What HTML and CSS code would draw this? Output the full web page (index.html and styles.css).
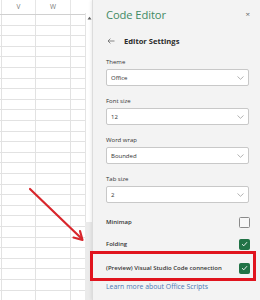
FILE: index.html
```html
<!DOCTYPE html>
<html lang="en">
<head>
<meta charset="utf-8">
<title>Code Editor settings</title>
<link rel="stylesheet" href="styles.css">
</head>
<body>
<div class="app">
  <div class="sheet">
    <div class="sheet-head">
      <span class="col col-edge"></span>
      <span class="col col-v">V</span>
      <span class="col col-w">W</span>
      <span class="col col-rest"></span>
    </div>
    <div class="sheet-body"></div>
  </div>
  <div class="vscroll">
    <div class="vscroll-head"></div>
    <div class="vscroll-track">
      <svg class="vscroll-up" width="5" height="4" viewBox="0 0 5 4"><path d="M0.5 3.5 L2.5 0.8 L4.5 3.5 Z" fill="#606060"/></svg>
    </div>
    <div class="vscroll-rest"></div>
  </div>
  <aside class="panel">
    <header class="panel-head">
      <h1 class="panel-title">Code Editor</h1>
      <span class="panel-close">×</span>
    </header>
    <div class="subhead">
      <svg class="back" width="8" height="6" viewBox="0 0 8 6"><path d="M7.5 3 H1 M3.4 0.6 L1 3 L3.4 5.4" fill="none" stroke="#6b6b6b" stroke-width="0.8"/></svg>
      <h2 class="subhead-title">Editor Settings</h2>
    </div>
    <div class="field">
      <div class="field-label">Theme</div>
      <div class="select"><span>Office</span><svg class="chev" width="7" height="4" viewBox="0 0 7 4"><path d="M0.5 0.5 L3.5 3.3 L6.5 0.5" fill="none" stroke="#a0a0a0" stroke-width="0.8"/></svg></div>
    </div>
    <div class="field">
      <div class="field-label">Font size</div>
      <div class="select"><span>12</span><svg class="chev" width="7" height="4" viewBox="0 0 7 4"><path d="M0.5 0.5 L3.5 3.3 L6.5 0.5" fill="none" stroke="#a0a0a0" stroke-width="0.8"/></svg></div>
    </div>
    <div class="field">
      <div class="field-label">Word wrap</div>
      <div class="select"><span>Bounded</span><svg class="chev" width="7" height="4" viewBox="0 0 7 4"><path d="M0.5 0.5 L3.5 3.3 L6.5 0.5" fill="none" stroke="#a0a0a0" stroke-width="0.8"/></svg></div>
    </div>
    <div class="field">
      <div class="field-label">Tab size</div>
      <div class="select"><span>2</span><svg class="chev" width="7" height="4" viewBox="0 0 7 4"><path d="M0.5 0.5 L3.5 3.3 L6.5 0.5" fill="none" stroke="#a0a0a0" stroke-width="0.8"/></svg></div>
    </div>
    <div class="toggle first">
      <span class="toggle-label">Minimap</span>
      <span class="cb"></span>
    </div>
    <div class="toggle">
      <span class="toggle-label">Folding</span>
      <span class="cb on"><svg width="7" height="6" viewBox="0 0 7 6"><path d="M1 3.2 L2.8 4.8 L6 1.2" fill="none" stroke="#fff" stroke-width="0.9"/></svg></span>
    </div>
    <div class="toggle vscode">
      <span class="toggle-label">(Preview) Visual Studio Code connection</span>
      <span class="cb on"><svg width="7" height="6" viewBox="0 0 7 6"><path d="M1 3.2 L2.8 4.8 L6 1.2" fill="none" stroke="#fff" stroke-width="0.9"/></svg></span>
    </div>
    <a class="learn" href="#">Learn more about Office Scripts</a>
  </aside>
  <div class="highlight"></div>
  <svg class="pointer" width="260" height="300" viewBox="0 0 260 300">
    <line x1="30" y1="189" x2="81" y2="238" stroke="#d8262c" stroke-width="2.2" stroke-linecap="round"/>
    <path d="M82.5 240 L73.5 237.5 M82.5 240 L80 231" fill="none" stroke="#d8262c" stroke-width="2.2" stroke-linecap="round"/>
  </svg>
</div>
</body>
</html>
```

FILE: styles.css
```css
* { box-sizing: border-box; }
html, body { margin: 0; padding: 0; }
body {
  width: 260px;
  height: 300px;
  overflow: hidden;
  background: #ffffff;
  font-family: "Open Sans", "Noto Sans", sans-serif;
}
.app {
  position: relative;
  display: flex;
  width: 260px;
  height: 300px;
}

/* spreadsheet */
.sheet {
  width: 85px;
  display: flex;
  flex-direction: column;
  background: #ffffff;
}
.sheet-head {
  height: 15px;
  display: flex;
  border-bottom: 1px solid #d0d0d0;
  background: #ffffff;
}
.col {
  height: 14px;
  font-size: 6.5px;
  line-height: 14px;
  color: #777;
  text-align: center;
  border-right: 1px solid #e6e6e6;
}
.col-edge { width: 2px; }
.col-v { width: 34px; }
.col-w { width: 35px; }
.col-rest { flex: 1; border-right: 0; }
.sheet-body {
  flex: 1;
  background-image:
    linear-gradient(to right, transparent 1px, #e2e2e2 1px, #e2e2e2 2px, transparent 2px, transparent 35px, #e2e2e2 35px, #e2e2e2 36px, transparent 36px, transparent 70px, #e2e2e2 70px, #e2e2e2 71px, transparent 71px),
    repeating-linear-gradient(to bottom, transparent 0, transparent 9.6px, #e2e2e2 9.6px, #e2e2e2 10.6px);
}

/* scrollbar */
.vscroll {
  width: 7px;
  display: flex;
  flex-direction: column;
}
.vscroll-head { height: 13px; background: #ffffff; }
.vscroll-track {
  height: 209px;
  background: #ffffff;
  border-left: 1px solid #e4e4e4;
  display: flex;
  justify-content: center;
  padding-top: 3px;
}
.vscroll-up { display: block; }
.vscroll-rest { flex: 1; background: #ebebeb; }

/* panel */
.panel {
  width: 168px;
  background: #f3f3f3;
  border-left: 1px solid #dcdcdc;
  box-shadow: -1px 0 3px rgba(0,0,0,0.08);
  padding: 0 10px 0 13px;
  display: flex;
  flex-direction: column;
}
.panel-head {
  height: 28px;
  display: flex;
  align-items: center;
  justify-content: space-between;
}
.panel-title {
  margin: 0;
  font-size: 11.2px;
  font-weight: 400;
  color: #3f8a63;
  letter-spacing: -0.1px;
}
.panel-close {
  font-size: 8px;
  color: #666;
  line-height: 1;
  margin-right: 0;
}
.subhead {
  height: 26px;
  display: flex;
  align-items: center;
  gap: 9px;
  padding-left: 1px;
}
.back { display: block; }
.subhead-title {
  margin: 0;
  font-size: 7.6px;
  font-weight: 700;
  color: #2b2b2b;
}
.field {
  display: flex;
  flex-direction: column;
  margin-top: 3px;
  margin-right: 1px;
}
.field + .field { margin-top: 10px; }
.field-label {
  height: 10px;
  line-height: 10px;
  font-size: 6px;
  font-weight: 500;
  color: #333;
  margin-bottom: 2px;
}
.select {
  height: 17px;
  background: #ffffff;
  border: 1px solid #c8c8c8;
  border-radius: 2px;
  display: flex;
  align-items: center;
  justify-content: space-between;
  padding: 0 4px 0 4px;
  font-size: 6px;
  color: #333;
}
.chev { display: block; }
.toggle {
  height: 22px;
  display: flex;
  align-items: center;
  justify-content: space-between;
}
.toggle.first { margin-top: 8px; }
.toggle.vscode { margin-top: 2px; }
.toggle-label {
  font-size: 6px;
  font-weight: 600;
  color: #333;
}
.cb {
  width: 11px;
  height: 11px;
  border: 1px solid #8a8a8a;
  border-radius: 1.5px;
  background: #f7f7f7;
  display: flex;
  align-items: center;
  justify-content: center;
}
.cb.on {
  background: #217346;
  border-color: #217346;
}
.cb svg { display: block; }
.learn {
  margin-top: 3px;
  font-size: 6.9px;
  line-height: 10px;
  color: #4a78b5;
  text-decoration: none;
}

/* annotations */
.highlight {
  position: absolute;
  left: 90px;
  top: 251px;
  width: 166px;
  height: 30px;
  border: 3px solid #e0141e;
}
.pointer {
  position: absolute;
  left: 0;
  top: 0;
  pointer-events: none;
}
```
